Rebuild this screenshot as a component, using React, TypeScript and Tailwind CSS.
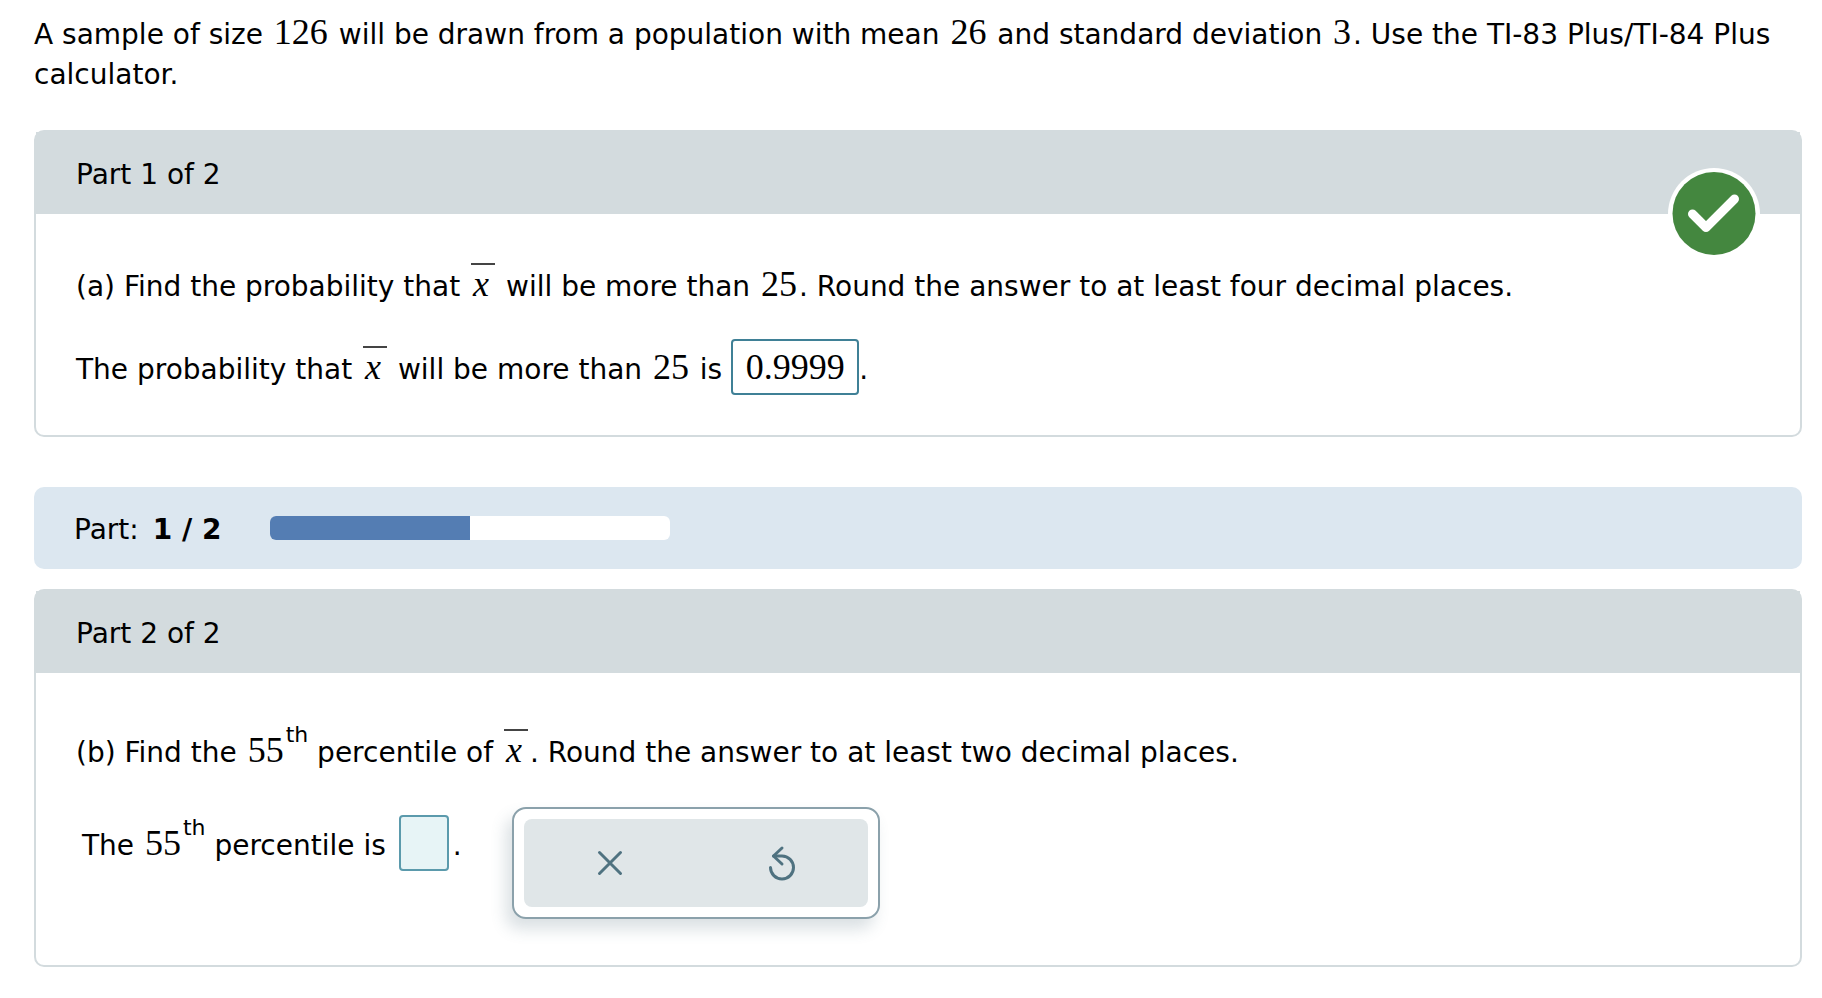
import { useState, type ReactNode } from "react";

function Num({ children }: { children: ReactNode }) {
  return <span className="mx-0.5 font-['Liberation_Serif',serif] text-4xl leading-none">{children}</span>;
}

function XBar() {
  return (
    <span className="mx-0.5 inline-block w-6 border-t-2 border-[#444] pt-px pl-0.5 font-['Liberation_Serif',serif] text-4xl leading-none italic">
      x
    </span>
  );
}

function Th() {
  return <span className="relative bottom-5 text-[22px] leading-none">th</span>;
}

function CorrectBadge() {
  return (
    <svg
      className="absolute -bottom-[46px] right-10 size-[92px]"
      viewBox="0 0 92 92"
      role="img"
      aria-label="Correct"
    >
      <circle cx="46" cy="46" r="46" fill="#fff" />
      <circle cx="46" cy="45.5" r="41.5" fill="#44873f" />
      <path
        d="M24.5 46 L38 59.5 L66.5 31"
        fill="none"
        stroke="#fff"
        strokeWidth="9"
        strokeLinecap="round"
        strokeLinejoin="round"
      />
    </svg>
  );
}

function PartCard({ title, done, children }: { title: string; done?: boolean; children: ReactNode }) {
  return (
    <section className="rounded-[10px] border-2 border-[#d3dbde] bg-white">
      <header className="relative bg-[#d3dbde] px-10 pt-[23px] pb-[19px]">
        <h2>{title}</h2>
        {done && <CorrectBadge />}
      </header>
      {children}
    </section>
  );
}

export default function App() {
  const [answer, setAnswer] = useState("");
  const progress = 50;

  return (
    <main className="min-h-screen bg-white pt-[14px] pr-5 pb-6 pl-[34px] font-['DejaVu_Sans',sans-serif] text-[28px] leading-10 text-black">
      <p>
        A sample of size <Num>126</Num> will be drawn from a population with mean <Num>26</Num> and
        standard deviation <Num>3</Num>. Use the TI-83 Plus/TI-84 Plus <span>calculator.</span>
      </p>

      <div className="mt-[35px]">
        <PartCard title="Part 1 of 2" done>
          <div className="px-10 pt-[49px] pb-10">
            <p>
              (a) Find the probability that <XBar /> will be more than <Num>25</Num>. Round the answer
              to at least four decimal places.
            </p>
            <label className="mt-8 block">
              The probability that <XBar /> will be more than <Num>25</Num> is{" "}
              <input
                type="text"
                readOnly
                value="0.9999"
                className="h-14 w-32 rounded border-2 border-[#3f8096] bg-white text-center font-['Liberation_Serif',serif] text-4xl outline-none"
              />
              .
            </label>
          </div>
        </PartCard>
      </div>

      <div className="mt-[50px] flex items-center rounded-[10px] bg-[#dce7f0] px-10 py-[19px]">
        <div className="flex gap-3.5 pt-1">
          <span>Part:</span>
          <strong className="font-bold">1 / 2</strong>
        </div>
        <div
          role="progressbar"
          aria-label="Parts completed"
          aria-valuenow={progress}
          className="ml-[49px] h-6 w-[400px] overflow-hidden rounded-md bg-white"
        >
          <div className="h-full bg-[#547db3]" style={{ width: `${progress}%` }} />
        </div>
      </div>

      <div className="mt-5">
        <PartCard title="Part 2 of 2">
          <div className="px-10 pt-14 pb-[46px]">
            <p>
              (b) Find the <Num>55</Num>
              <Th /> percentile of <XBar />. Round the answer to at least two decimal places.
            </p>
            <div className="mt-[34px] flex items-start gap-[50px] pl-1.5">
              <label className="pt-2">
                The <Num>55</Num>
                <Th /> percentile is{" "}
                <input
                  type="text"
                  value={answer}
                  onChange={(e) => setAnswer(e.target.value)}
                  className="mx-1 h-14 w-[50px] rounded border-2 border-[#5b9aac] bg-[#e7f4f6] text-center font-['Liberation_Serif',serif] text-4xl outline-none"
                />
                .
              </label>
              <div className="rounded-[14px] border-2 border-[#8ba1ab] bg-white p-2.5 shadow-[-6px_10px_16px_rgba(70,100,115,0.2)]">
                <div className="flex h-[88px] w-[344px] rounded-lg bg-[#e0e6e8]">
                  <button
                    type="button"
                    aria-label="Clear"
                    onClick={() => setAnswer("")}
                    className="flex flex-1 items-center justify-center"
                  >
                    <svg className="size-9" viewBox="0 0 36 36" fill="none" stroke="#4f7280" strokeWidth="3" strokeLinecap="round">
                      <path d="M7.5 7.5 L28.5 28.5 M28.5 7.5 L7.5 28.5" />
                    </svg>
                  </button>
                  <button
                    type="button"
                    aria-label="Reset"
                    onClick={() => setAnswer("")}
                    className="flex flex-1 items-center justify-center"
                  >
                    <svg
                      className="size-9"
                      viewBox="0 0 36 36"
                      fill="none"
                      stroke="#4f7280"
                      strokeWidth="3"
                      strokeLinecap="round"
                      strokeLinejoin="round"
                    >
                      <path d="M18 3 L9.5 11 L18 19" />
                      <path d="M9.5 11 H18 A11.5 11.5 0 1 1 6.5 22.5" />
                    </svg>
                  </button>
                </div>
              </div>
            </div>
          </div>
        </PartCard>
      </div>
    </main>
  );
}
